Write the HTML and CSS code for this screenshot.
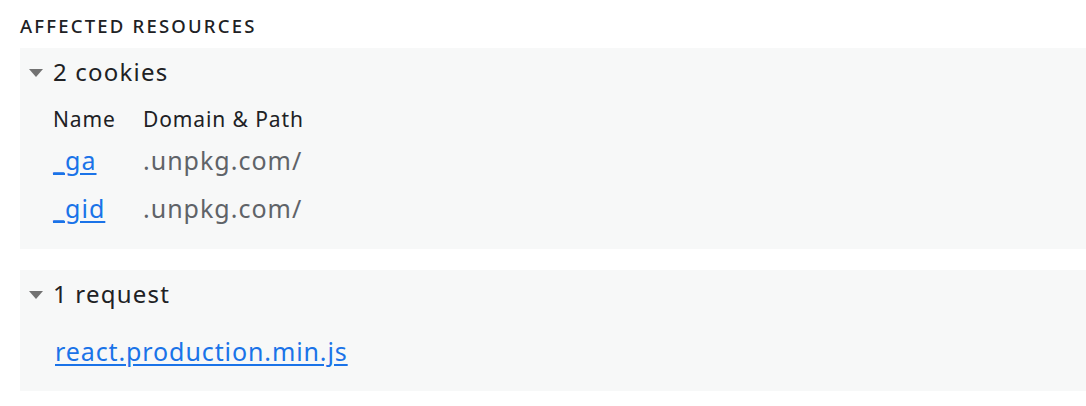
FILE: index.html
```html
<!DOCTYPE html>
<html lang="en">
<head>
    <meta charset="UTF-8">
    <title>Affected resources</title>
    <link rel="stylesheet" href="styles.css">
</head>
<body>
    <div class="resources">
        <h2 class="title">Affected resources</h2>
        <div class="group cookies-group">
            <div class="summary"><span class="arrow"></span>2 cookies</div>
            <table class="cookies">
                <tr>
                    <th>Name</th>
                    <th>Domain &amp; Path</th>
                </tr>
                <tr class="first-row">
                    <td><a href="#">_ga</a></td>
                    <td class="path">.unpkg.com/</td>
                </tr>
                <tr>
                    <td><a href="#">_gid</a></td>
                    <td class="path">.unpkg.com/</td>
                </tr>
            </table>
        </div>
        <div class="group">
            <div class="summary"><span class="arrow"></span>1 request</div>
            <div class="requests">
                <a href="#">react.production.min.js</a>
            </div>
        </div>
    </div>
</body>
</html>
```

FILE: styles.css
```css
*{
   margin: 0;
   padding: 0;
   box-sizing: border-box;
}
body{
   background-color: #fff;
   font-family: "Noto Sans", "Open Sans", sans-serif;
   color: #202124;
}
.resources{
   padding: 14px 0 0 20px;
}
.title{
   font-size: 18.5px;
   font-weight: 500;
   text-transform: uppercase;
   letter-spacing: 2.2px;
   line-height: 24px;
   margin-bottom: 10px;
}
.group{
   background-color: #f7f8f8;
   margin-bottom: 21px;
}
.cookies-group{
   padding-bottom: 17px;
}
.summary{
   display: flex;
   align-items: center;
   font-size: 24px;
   letter-spacing: 1.2px;
   line-height: 48px;
   padding-left: 9px;
}
.arrow{
   width: 0;
   height: 0;
   border-left: 7px solid transparent;
   border-right: 7px solid transparent;
   border-top: 8px solid #727272;
   margin: 2px 10px 0 0;
}
.cookies{
   border-collapse: collapse;
   margin: 9px 0 0 33px;
}
.cookies th{
   font-size: 21px;
   font-weight: normal;
   letter-spacing: 0.9px;
   text-align: left;
   line-height: 28px;
   padding: 0;
}
.cookies td{
   font-size: 25px;
   letter-spacing: 1px;
   line-height: 48px;
   padding: 0;
}
.cookies .first-row td{
   padding-top: 3px;
}
.cookies th:first-child,
.cookies td:first-child{
   width: 90px;
}
.path{
   color: #5f6368;
}
a{
   color: #1a73e8;
   text-underline-offset: 3px;
}
.requests{
   padding: 9px 0 16px 35px;
   font-size: 25px;
   letter-spacing: 0.9px;
   line-height: 48px;
}
```
